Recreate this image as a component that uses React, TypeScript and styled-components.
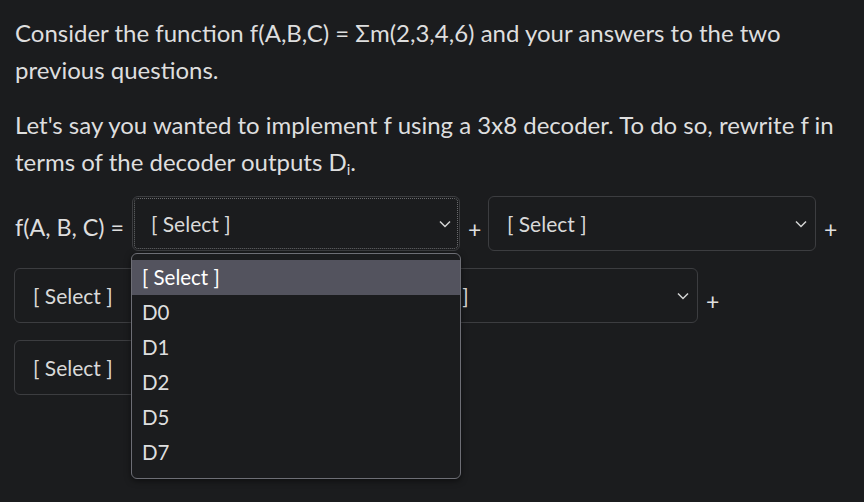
import styled, { createGlobalStyle } from 'styled-components';

const GlobalStyle = createGlobalStyle`
    html, body {
        margin: 0;
        padding: 0;
        background: #1b1c1e;
    }
    body {
        font-family: Lato, 'Open Sans', sans-serif;
        color: #dedede;
    }
`;

const options = ['[ Select ]', 'D0', 'D1', 'D2', 'D5', 'D7'];

const Page = styled.div`
    width: 864px;
    height: 502px;
    padding: 14px 14px 0 14px;
    box-sizing: border-box;
    overflow: hidden;
`;

const Prompt = styled.div`
    display: flex;
    flex-direction: column;
    gap: 18px;
    margin: 0 0 16px 1px;
`;

const Para = styled.p`
    margin: 0;
    font-size: 24px;
    line-height: 37px;
`;

const Sub = styled.sub`
    font-size: 0.62em;
    line-height: 0;
    vertical-align: -0.3em;
`;

const Answer = styled.div`
    display: flex;
    flex-wrap: wrap;
    align-items: center;
    column-gap: 8px;
    row-gap: 17px;
`;

const Label = styled.span`
    font-size: 23.3px;
    margin-left: 1px;
    padding-top: 6px;
`;

const Plus = styled.span`
    font-size: 23px;
    width: 12px;
    text-align: center;
    padding-top: 10px;
`;

const SelectWrap = styled.div`
    position: relative;
`;

const SelectBox = styled.div<{ $focused?: boolean }>`
    width: 328px;
    height: 55px;
    box-sizing: border-box;
    border: 1px solid #3c3d40;
    border-radius: 6px;
    padding: 0 8px 0 18px;
    display: flex;
    align-items: center;
    justify-content: space-between;
    font-size: 21px;
    color: #d9d9d9;
    outline: ${p => (p.$focused ? '1px dotted #6a6b6e' : 'none')};
    outline-offset: -3px;
`;

const Chevron = () => (
    <svg width="12" height="8" viewBox="0 0 12 8" fill="none">
        <path d="M1 1.5 L6 6.5 L11 1.5" stroke="#d4d4d4" strokeWidth="1.5" />
    </svg>
);

const ListBox = styled.ul`
    position: absolute;
    top: calc(100% + 2px);
    left: -1px;
    right: -1px;
    margin: 0;
    padding: 6px 0 8px 0;
    list-style: none;
    background: #1b1c1e;
    border: 1px solid #6d6e75;
    border-radius: 6px;
    box-shadow: 0 2px 6px rgba(0, 0, 0, 0.5);
    z-index: 10;
`;

const Option = styled.li<{ $active?: boolean }>`
    height: 35px;
    line-height: 35px;
    padding: 0 10px;
    font-size: 20.5px;
    color: ${p => (p.$active ? '#ffffff' : '#dedede')};
    background: ${p => (p.$active ? '#53535e' : 'transparent')};
`;

const Select = ({ open }: { open?: boolean }) => (
    <SelectWrap>
        <SelectBox $focused={open}>
            <span>[ Select ]</span>
            <Chevron />
        </SelectBox>
        {open && (
            <ListBox>
                {options.map((o, i) => (
                    <Option key={o} $active={i === 0}>
                        {o}
                    </Option>
                ))}
            </ListBox>
        )}
    </SelectWrap>
);

export default function App() {
    return (
        <Page>
            <GlobalStyle />
            <Prompt>
                <Para>
                    Consider the function f(A,B,C) = Σm(2,3,4,6) and your answers to the two
                    previous questions.
                </Para>
                <Para>
                    Let's say you wanted to implement f using a 3x8 decoder. To do so, rewrite f
                    in terms of the decoder outputs D<Sub>i</Sub>.
                </Para>
            </Prompt>
            <Answer>
                <Label>f(A, B, C) =</Label>
                <Select open />
                <Plus>+</Plus>
                <Select />
                <Plus>+</Plus>
                <Select />
                <Plus>+</Plus>
                <Select />
                <Plus>+</Plus>
                <Select />
            </Answer>
        </Page>
    );
}
